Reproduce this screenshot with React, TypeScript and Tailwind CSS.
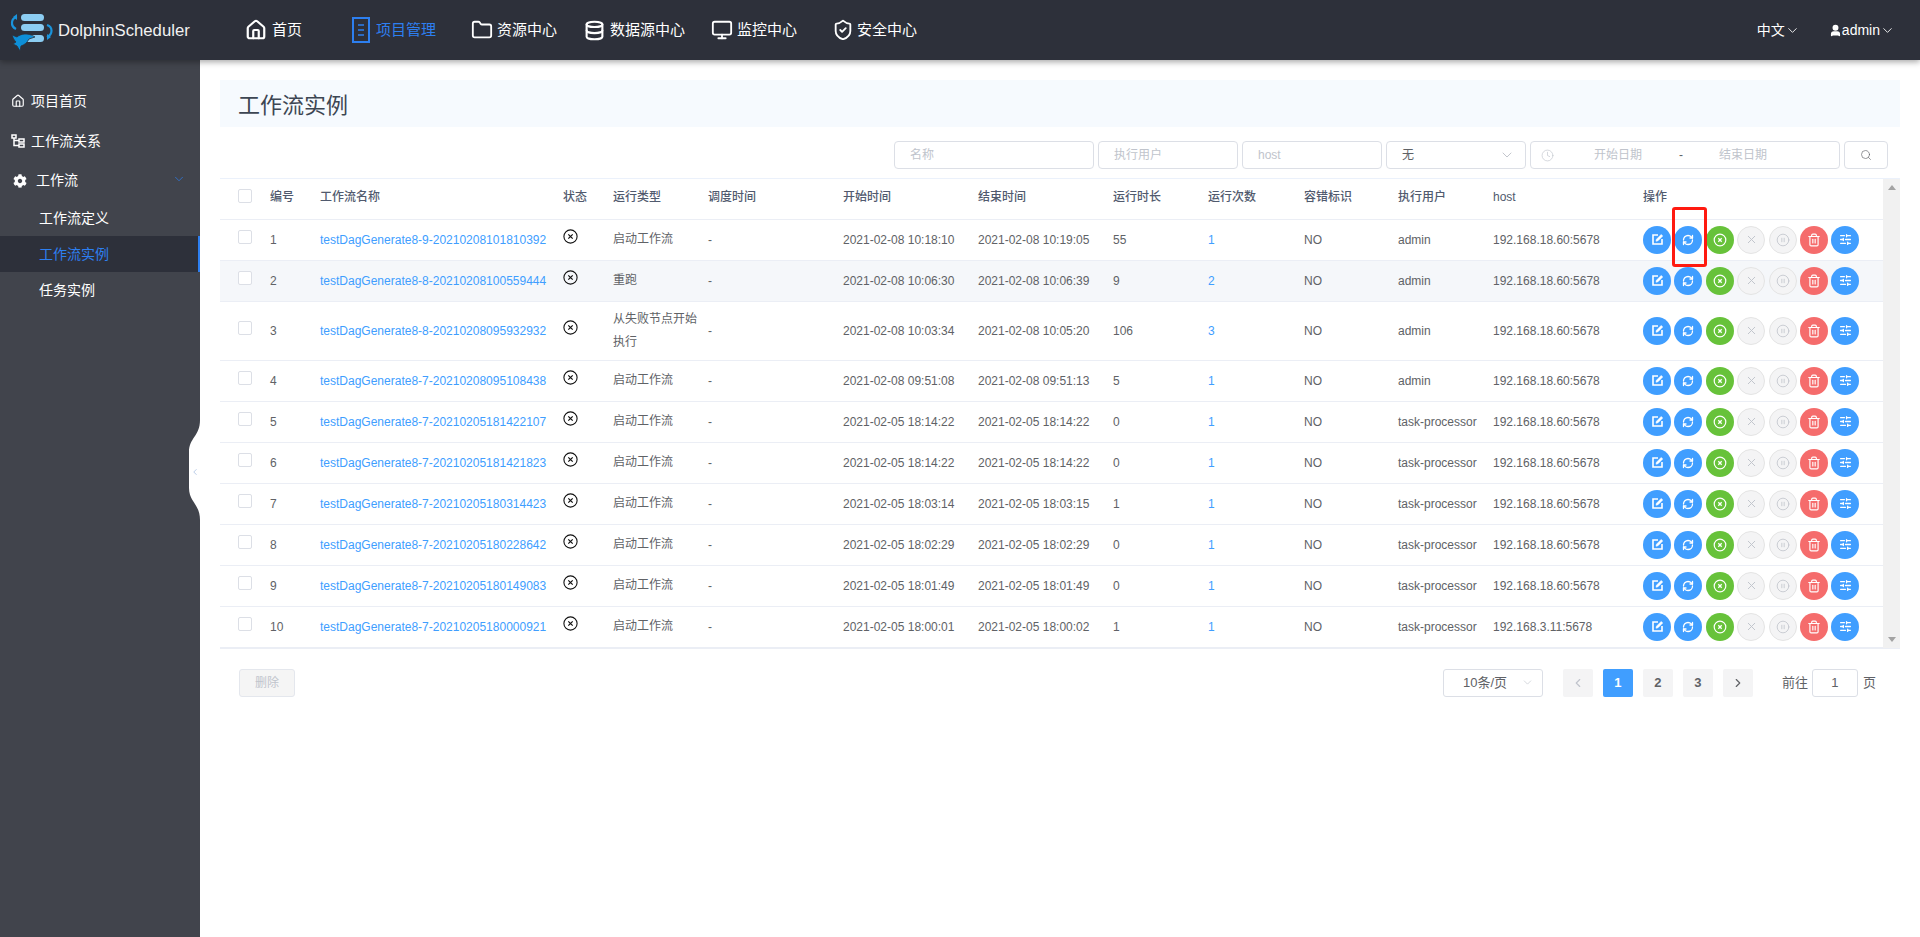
import {
  ChevronDown,
  ChevronLeft,
  ChevronRight,
  CirclePause,
  Clock,
  Database,
  Folder,
  House,
  Monitor,
  RefreshCw,
  Search,
  ShieldCheck,
  SlidersHorizontal,
  Trash2,
  User,
  X,
} from "lucide-react";
import { FaCog } from "react-icons/fa";

const navItems = [
  { label: "首页", width: "w-[107px]", gap: "gap-[5px]", icon: <House size={22} strokeWidth={2.4} />, active: false },
  {
    label: "项目管理",
    width: "w-[119px]",
    gap: "gap-[6px]",
    active: true,
    icon: (
      <svg width="18" height="26" viewBox="0 0 18 26" fill="none" stroke="currentColor" strokeWidth="2">
        <rect x="1" y="1" width="16" height="24" />
        <path d="M6 8h6M6 13h6M6 18h6" strokeWidth="1.5" />
      </svg>
    ),
  },
  { label: "资源中心", width: "w-[113px]", gap: "gap-[4px]", icon: <Folder size={22} strokeWidth={2} />, active: false },
  { label: "数据源中心", width: "w-[127px]", gap: "gap-[5px]", icon: <Database size={21} strokeWidth={2.4} />, active: false },
  { label: "监控中心", width: "w-[121px]", gap: "gap-[4px]", icon: <Monitor size={22} strokeWidth={2} />, active: false },
  { label: "安全中心", width: "w-[100px]", gap: "gap-[3px]", icon: <ShieldCheck size={22} strokeWidth={2} />, active: false },
];

const rows = [
  { id: 1, name: "testDagGenerate8-9-20210208101810392", type: "启动工作流", start: "2021-02-08 10:18:10", end: "2021-02-08 10:19:05", dur: "55", times: "1", user: "admin", host: "192.168.18.60:5678" },
  { id: 2, name: "testDagGenerate8-8-20210208100559444", type: "重跑", start: "2021-02-08 10:06:30", end: "2021-02-08 10:06:39", dur: "9", times: "2", user: "admin", host: "192.168.18.60:5678" },
  { id: 3, name: "testDagGenerate8-8-20210208095932932", type: "从失败节点开始执行", start: "2021-02-08 10:03:34", end: "2021-02-08 10:05:20", dur: "106", times: "3", user: "admin", host: "192.168.18.60:5678" },
  { id: 4, name: "testDagGenerate8-7-20210208095108438", type: "启动工作流", start: "2021-02-08 09:51:08", end: "2021-02-08 09:51:13", dur: "5", times: "1", user: "admin", host: "192.168.18.60:5678" },
  { id: 5, name: "testDagGenerate8-7-20210205181422107", type: "启动工作流", start: "2021-02-05 18:14:22", end: "2021-02-05 18:14:22", dur: "0", times: "1", user: "task-processor", host: "192.168.18.60:5678" },
  { id: 6, name: "testDagGenerate8-7-20210205181421823", type: "启动工作流", start: "2021-02-05 18:14:22", end: "2021-02-05 18:14:22", dur: "0", times: "1", user: "task-processor", host: "192.168.18.60:5678" },
  { id: 7, name: "testDagGenerate8-7-20210205180314423", type: "启动工作流", start: "2021-02-05 18:03:14", end: "2021-02-05 18:03:15", dur: "1", times: "1", user: "task-processor", host: "192.168.18.60:5678" },
  { id: 8, name: "testDagGenerate8-7-20210205180228642", type: "启动工作流", start: "2021-02-05 18:02:29", end: "2021-02-05 18:02:29", dur: "0", times: "1", user: "task-processor", host: "192.168.18.60:5678" },
  { id: 9, name: "testDagGenerate8-7-20210205180149083", type: "启动工作流", start: "2021-02-05 18:01:49", end: "2021-02-05 18:01:49", dur: "0", times: "1", user: "task-processor", host: "192.168.18.60:5678" },
  { id: 10, name: "testDagGenerate8-7-20210205180000921", type: "启动工作流", start: "2021-02-05 18:00:01", end: "2021-02-05 18:00:02", dur: "1", times: "1", user: "task-processor", host: "192.168.3.11:5678" },
];

const headers = ["编号", "工作流名称", "状态", "运行类型", "调度时间", "开始时间", "结束时间", "运行时长", "运行次数", "容错标识", "执行用户", "host", "操作"];

function Logo() {
  return (
    <svg width="56" height="50" viewBox="0 0 56 50" className="shrink-0" fill="none">
      <rect x="21" y="8" width="23" height="7" rx="3.5" fill="#8ccdf2" />
      <rect x="21" y="18" width="23" height="7" rx="3.5" fill="#8ccdf2" />
      <rect x="21" y="29" width="23" height="7" rx="3.5" fill="#8ccdf2" />
      <path d="M17 11 C11 12 10 20 16 23" stroke="#1a94dc" strokeWidth="2.2" />
      <path d="M17 8 L13 11 L17 14 Z" fill="#1a94dc" />
      <path d="M47 19 C53 21 53 28 47 31" stroke="#1a94dc" strokeWidth="2.2" />
      <path d="M47 28 L47 34 L51 31 Z" fill="#1a94dc" />
      <path d="M12 29 L17 31 C20 28 28 26 35 31 L29 33 C27 37 24 39 21 40 L20 45 L17 40 L13 38 L16 36 C14 34 13 32 12 29 Z" fill="#0d8fd8" stroke="#2d303a" strokeWidth="0.8" />
    </svg>
  );
}

function Header() {
  return (
    <header className="h-[60px] shrink-0 bg-[#2d303a] flex items-center text-white shadow-[0_2px_6px_rgba(0,0,0,0.35)] relative z-10">
      <div className="w-[245px] shrink-0 flex items-center pt-[2px]">
        <Logo />
        <span className="text-[16.7px] leading-none ml-[2px] text-[#f2f2f2]">DolphinScheduler</span>
      </div>
      <nav className="flex items-center">
        {navItems.map((item) => (
          <a
            key={item.label}
            href="#"
            className={`flex items-center text-[15px] ${item.width} ${item.gap} ${item.active ? "text-[#2d7ff0]" : "text-white"}`}
          >
            {item.icon}
            <span>{item.label}</span>
          </a>
        ))}
      </nav>
      <div className="ml-auto flex items-center text-[14px] pr-[25px]">
        <span>中文</span>
        <ChevronDown size={15} strokeWidth={1.4} />
        <span className="flex items-center ml-[29px]">
          <User size={13} strokeWidth={3} fill="currentColor" />
          <span>admin</span>
          <ChevronDown size={15} strokeWidth={1.4} />
        </span>
      </div>
    </header>
  );
}

function Sidebar() {
  return (
    <aside className="w-[200px] shrink-0 bg-[#41444c] text-white text-[14px] pt-[21px]">
      <a href="#" className="h-[40px] flex items-center pl-[11px] gap-[6px]">
        <House size={14} strokeWidth={2} />
        项目首页
      </a>
      <a href="#" className="h-[40px] flex items-center pl-[11px] gap-[6px]">
        <svg width="14" height="14" viewBox="0 0 14 14" fill="none" stroke="currentColor" strokeWidth="1.5">
          <rect x="1" y="1" width="4" height="3" />
          <rect x="8" y="5" width="5" height="3" />
          <rect x="8" y="10" width="5" height="3" />
          <path d="M3 4v7.5h5M3 6.5h5" />
        </svg>
        工作流关系
      </a>
      <div className="h-[39px] flex items-center pl-[13px] gap-[9px] pr-[14px]">
        <FaCog size={14} />
        工作流
        <ChevronDown size={14} strokeWidth={1.2} className="ml-auto text-[#2d7ff0] mb-[4px]" />
      </div>
      <div className="flex flex-col">
        <a href="#" className="h-[36px] flex items-center pl-[39px]">工作流定义</a>
        <a href="#" className="h-[36px] flex items-center pl-[39px] bg-[#2d303a] text-[#2d7ff0] border-r-2 border-[#2d7ff0]">工作流实例</a>
        <a href="#" className="h-[36px] flex items-center pl-[39px]">任务实例</a>
      </div>
    </aside>
  );
}

function StatusIcon() {
  return (
    <svg width="15" height="15" viewBox="0 0 15 15" fill="none" stroke="#111" className="mb-[6px]">
      <circle cx="7.5" cy="7.5" r="6.6" strokeWidth="1.1" />
      <path d="M5.3 5.3l4.4 4.4M9.7 5.3l-4.4 4.4" strokeWidth="1.2" />
    </svg>
  );
}

function Checkbox() {
  return <span className="block w-[14px] h-[14px] bg-white border border-[#dcdfe6] rounded-[2px] mb-[6px]" />;
}

function EditIcon() {
  return (
    <svg width="13" height="13" viewBox="0 0 13 13" fill="none" stroke="currentColor">
      <path d="M7 2H2v9h9V6" strokeWidth="1.6" />
      <path d="M5 8.2l.5-2L10.2 1.5l1.5 1.5L7 7.7z" fill="currentColor" strokeWidth="0.6" />
    </svg>
  );
}

function Actions() {
  const round = "w-[28px] h-[28px] rounded-full flex items-center justify-center shrink-0";
  return (
    <div className="flex items-center gap-[3.4px]">
      <button className={`${round} bg-[#409eff] text-white`}><EditIcon /></button>
      <button className={`${round} bg-[#409eff] text-white`}><RefreshCw size={12} strokeWidth={2.6} /></button>
      <button className={`${round} bg-[#67c23a] text-white`}>
        <svg width="14" height="14" viewBox="0 0 14 14" fill="none" stroke="currentColor">
          <circle cx="7" cy="7" r="5.8" strokeWidth="1.2" />
          <path d="M5.3 5.3l3.4 3.4M8.7 5.3l-3.4 3.4" strokeWidth="1.3" />
        </svg>
      </button>
      <button className={`${round} bg-[#f4f4f5] border border-[#e4e4e4] text-[#c0c4cc]`}><X size={13} strokeWidth={1.8} /></button>
      <button className={`${round} bg-[#f4f4f5] border border-[#e4e4e4] text-[#c0c4cc]`}><CirclePause size={14} strokeWidth={1.4} /></button>
      <button className={`${round} bg-[#f56c6c] text-white`}><Trash2 size={14} strokeWidth={2} /></button>
      <button className={`${round} bg-[#409eff] text-white`}><SlidersHorizontal size={13} strokeWidth={2.4} /></button>
    </div>
  );
}

function Filters() {
  const input = "h-[28px] border border-[#dcdfe6] rounded-[4px] px-[15px] text-[12px] outline-none placeholder:text-[#c0c4cc]";
  return (
    <div className="mt-[14px] pr-[12px] flex justify-end gap-[4px]">
      <input readOnly placeholder="名称" className={`${input} w-[200px]`} />
      <input readOnly placeholder="执行用户" className={`${input} w-[140px]`} />
      <input readOnly placeholder="host" className={`${input} w-[140px]`} />
      <div className="h-[28px] w-[140px] border border-[#dcdfe6] rounded-[4px] pl-[15px] pr-[10px] text-[12px] text-[#606266] flex items-center justify-between">
        无
        <ChevronDown size={16} strokeWidth={1.2} className="text-[#b4b8c0]" />
      </div>
      <div className="h-[28px] w-[310px] border border-[#dcdfe6] rounded-[4px] text-[12px] text-[#c0c4cc] flex items-center pl-[10px]">
        <Clock size={13} strokeWidth={1.2} />
        <span className="ml-[40px] w-[48px]">开始日期</span>
        <span className="ml-[37px] text-[#606266]">-</span>
        <span className="ml-[36px] w-[48px]">结束日期</span>
      </div>
      <button className="h-[28px] w-[44px] border border-[#dcdfe6] rounded-[4px] flex items-center justify-center text-[#606266]">
        <Search size={12} strokeWidth={1.3} />
      </button>
    </div>
  );
}

function Table() {
  return (
    <div className="mt-[9px] flex border-t border-t-[#ebf1fb] border-b border-b-[#ebeef5]">
      <table className="w-[1663px] table-fixed border-collapse text-[12px] text-[#606266]">
        <colgroup>
          <col className="w-[40px]" />
          <col className="w-[50px]" />
          <col className="w-[243px]" />
          <col className="w-[50px]" />
          <col className="w-[95px]" />
          <col className="w-[135px]" />
          <col className="w-[135px]" />
          <col className="w-[135px]" />
          <col className="w-[95px]" />
          <col className="w-[96px]" />
          <col className="w-[94px]" />
          <col className="w-[95px]" />
          <col className="w-[150px]" />
          <col className="w-[250px]" />
        </colgroup>
        <thead>
          <tr className="h-[40px] border-b border-[#ebeef5]">
            <th className="pl-[18px] align-middle"><Checkbox /></th>
            {headers.map((h) => (
              <th key={h} className="px-[10px] pb-[3px] text-left font-medium text-[#515a6e] align-middle">{h}</th>
            ))}
          </tr>
        </thead>
        <tbody>
          {rows.map((row) => (
            <tr key={row.id} className={`border-b border-[#ebeef5] ${row.id === 2 ? "bg-[#f5f7fa]" : "bg-white"} ${row.id === 3 ? "h-[59px]" : "h-[41px]"}`}>
              <td className="pl-[18px]"><Checkbox /></td>
              <td className="px-[10px]">{row.id}</td>
              <td className="px-[10px] text-[#409eff] whitespace-nowrap">{row.name}</td>
              <td className="px-[10px]"><StatusIcon /></td>
              <td className="pl-[10px] pr-[1px] leading-[23px]">{row.type}</td>
              <td className="px-[10px]">-</td>
              <td className="px-[10px] whitespace-nowrap">{row.start}</td>
              <td className="px-[10px] whitespace-nowrap">{row.end}</td>
              <td className="px-[10px]">{row.dur}</td>
              <td className="px-[10px] text-[#409eff]">{row.times}</td>
              <td className="px-[10px]">NO</td>
              <td className="px-[10px] whitespace-nowrap">{row.user}</td>
              <td className="px-[10px] whitespace-nowrap">{row.host}</td>
              <td className="px-[10px]"><Actions /></td>
            </tr>
          ))}
        </tbody>
      </table>
      <div className="w-[17px] shrink-0 bg-[#f1f1f1] flex flex-col items-center justify-between py-[6px]">
        <span className="w-0 h-0 border-x-[4px] border-x-transparent border-b-[5px] border-b-[#a3a3a3]" />
        <span className="w-0 h-0 border-x-[4px] border-x-transparent border-t-[5px] border-t-[#a3a3a3]" />
      </div>
    </div>
  );
}

function Pagination() {
  const page = "w-[30px] h-[28px] rounded-[2px] flex items-center justify-center font-bold text-[13px]";
  return (
    <div className="mt-[20px] pl-[19px] pr-[24px] flex items-center justify-between">
      <button className="w-[56px] h-[28px] border border-[#e4e7ed] rounded-[3px] bg-[#f5f5f5] text-[12px] text-[#c0c4cc]">删除</button>
      <div className="flex items-center text-[13px] text-[#606266]">
        <div className="w-[100px] h-[28px] border border-[#dcdfe6] rounded-[3px] flex items-center justify-between pl-[19px] pr-[8px]">
          10条/页
          <ChevronDown size={13} strokeWidth={1.2} className="text-[#c0c4cc]" />
        </div>
        <div className="ml-[20px] flex gap-[10px]">
          <button className={`${page} bg-[#f4f4f5] text-[#c0c4cc]`}><ChevronLeft size={14} strokeWidth={2} /></button>
          <button className={`${page} bg-[#409eff] text-white`}>1</button>
          <button className={`${page} bg-[#f4f4f5]`}>2</button>
          <button className={`${page} bg-[#f4f4f5]`}>3</button>
          <button className={`${page} bg-[#f4f4f5]`}><ChevronRight size={14} strokeWidth={2} /></button>
        </div>
        <span className="ml-[29px]">前往</span>
        <div className="ml-[4px] w-[46px] h-[28px] border border-[#dcdfe6] rounded-[3px] flex items-center justify-center">1</div>
        <span className="ml-[5px]">页</span>
      </div>
    </div>
  );
}

export default function App() {
  return (
    <div className="relative h-[937px] flex flex-col bg-white overflow-hidden [font-family:'Liberation_Sans','Noto_Sans_CJK_SC',sans-serif]">
      <Header />
      <div className="flex flex-1 min-h-0">
        <Sidebar />
        <main className="flex-1 min-w-0 pl-[20px] pr-[20px] pt-[20px]">
          <div className="h-[47px] bg-[#f6fafe] flex items-center pl-[18px] pt-[3px] text-[22px] text-[#3d4653]">工作流实例</div>
          <Filters />
          <Table />
          <Pagination />
        </main>
      </div>

      {/* collapse handle on the sidebar edge */}
      <div className="absolute left-[188px] top-[420px] w-[12px] h-[100px] text-white">
        <svg width="12" height="100" viewBox="0 0 12 100" fill="currentColor">
          <path d="M12 0 C12 16 1 18 1 32 L1 68 C1 82 12 84 12 100 Z" />
        </svg>
        <ChevronLeft size={10} strokeWidth={1.4} className="absolute left-[2px] top-[47px] text-[#8aa8d8]" />
      </div>

      {/* red annotation box */}
      <div className="absolute left-[1672px] top-[207px] w-[35px] h-[60px] border-[3px] border-[#ff1a10] rounded-[3px]" />
    </div>
  );
}
